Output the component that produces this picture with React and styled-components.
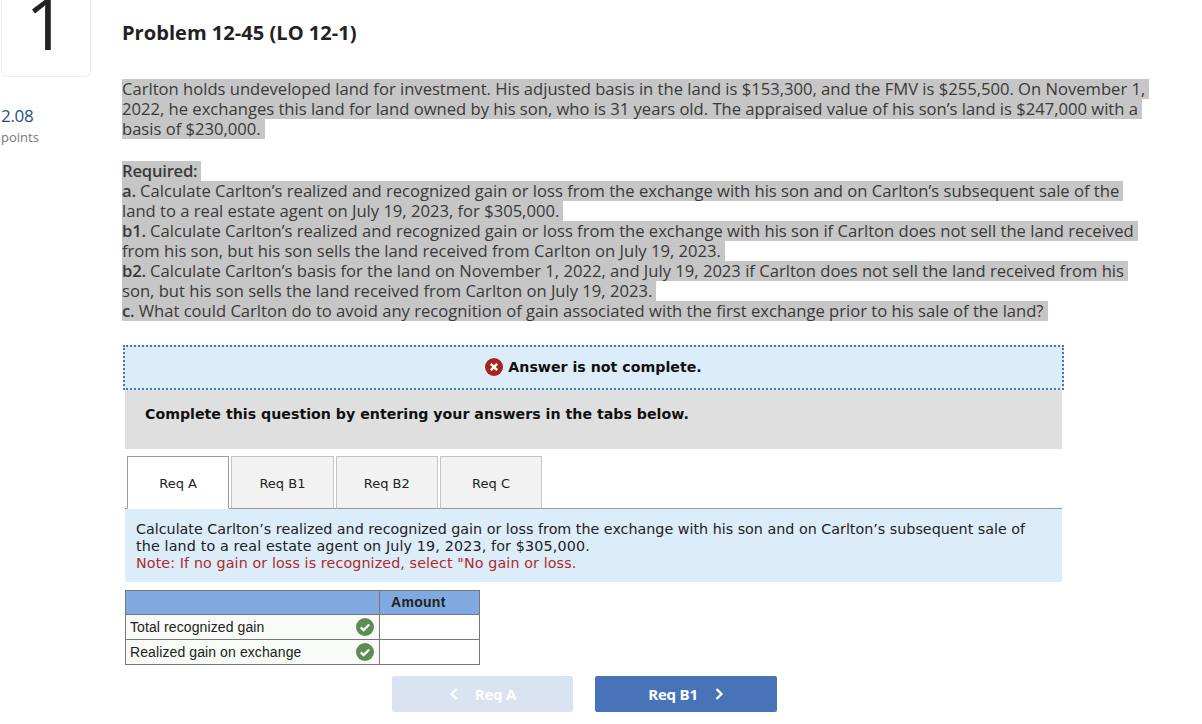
import React from "react";
import styled, { createGlobalStyle } from "styled-components";

const GlobalStyle = createGlobalStyle`
  html, body {
    margin: 0;
    padding: 0;
    background: #fff;
    overflow: hidden;
  }
`;

const Page = styled.div`
  width: 1202px;
  height: 724px;
  display: flex;
  overflow: hidden;
  font-family: "Open Sans", sans-serif;
  color: #3a3a3a;
`;

const Side = styled.aside`
  width: 122px;
  flex: none;
  padding-left: 1px;
  box-sizing: border-box;
`;

const NumberCard = styled.div`
  width: 90px;
  height: 77px;
  box-sizing: border-box;
  border: 1px solid #eee;
  border-top: none;
  border-radius: 0 0 6px 6px;
  display: flex;
  justify-content: center;
  align-items: flex-end;
  padding-bottom: 29px;
  font-size: 72px;
  line-height: 50px;
  color: #222;
  overflow: hidden;
`;

const Points = styled.div`
  margin-top: 27px;
  font-size: 17px;
  line-height: 24px;
  letter-spacing: -0.3px;
  color: #1f4e8c;
`;

const PointsLabel = styled.div`
  font-size: 13px;
  line-height: 18px;
  color: #777;
`;

const Main = styled.main`
  flex: 1;
  min-width: 0;
`;

const Title = styled.h1`
  margin: 20px 0 0;
  font-size: 20.1px;
  line-height: 26px;
  font-weight: 700;
  color: #222;
`;

const Prompt = styled.div`
  margin-top: 33px;
  font-size: 16.6px;
  line-height: 20px;
  white-space: nowrap;
`;

const Line = styled.div`
  height: 20px;
`;

const Selected = styled.span`
  background: #c6c6c6;
  padding-right: 4px;
  display: inline-block;
`;

const Strong = styled.b`
  font-weight: 600;
  letter-spacing: -0.2px;
`;

const Spacer = styled.div`
  height: 22px;
`;

const Status = styled.div`
  margin: 24px 0 0 1px;
  width: 941px;
  height: 45px;
  box-sizing: border-box;
  border: 2px dotted #4a74b8;
  padding-bottom: 2px;
  background: #dcecf8;
  display: flex;
  align-items: center;
  justify-content: center;
  gap: 5px;
  font-family: "DejaVu Sans", sans-serif;
  font-size: 14.2px;
  font-weight: 700;
  color: #111;
`;

const StatusIcon = styled.svg`
  width: 18px;
  height: 18px;
  flex: none;
`;

const Instructions = styled.div`
  margin-left: 3px;
  width: 937px;
  height: 59px;
  box-sizing: border-box;
  background: #dfdfdf;
  padding: 14px 20px 0;
  font-family: "DejaVu Sans", sans-serif;
  font-size: 14.2px;
  line-height: 20px;
  font-weight: 700;
  color: #111;
`;

const Tabs = styled.div`
  margin: 7px 0 0 3px;
  width: 937px;
  display: flex;
  gap: 2px;
  padding-left: 2px;
  box-sizing: border-box;
  border-bottom: 1px solid #999;
`;

const Tab = styled.div`
  width: 102.3px;
  height: 53px;
  box-sizing: border-box;
  margin-bottom: -1px;
  padding-top: 2px;
  border: 1px solid ${(p) => (p.$active ? "#999" : "#c4c4c4")};
  border-bottom: ${(p) => (p.$active ? "1px solid #fff" : "1px solid #999")};
  background: ${(p) => (p.$active ? "#fff" : "#f2f2f2")};
  display: flex;
  align-items: center;
  justify-content: center;
  font-family: "DejaVu Sans", sans-serif;
  font-size: 13px;
  color: #222;
`;

const Detail = styled.div`
  margin-left: 3px;
  width: 937px;
  height: 73px;
  box-sizing: border-box;
  background: #dcecf8;
  padding: 12px 11px 0;
  font-family: "DejaVu Sans", sans-serif;
  font-size: 14.3px;
  line-height: 17px;
  color: #222;
`;

const DetailTail = styled.div`
  letter-spacing: 0.14px;
`;

const Note = styled.div`
  letter-spacing: 0.1px;
  color: #b02a2a;
`;

const Table = styled.table`
  margin: 8px 0 0 3px;
  border-collapse: collapse;
  font-family: "Liberation Sans", sans-serif;
  font-size: 14px;
  letter-spacing: 0.1px;
  color: #222;
`;

const HeadCell = styled.th`
  height: 24px;
  padding: 0 0 2px 11px;
  box-sizing: border-box;
  width: ${(p) => p.$width}px;
  border: 1px solid #777;
  background: #7fa9e0;
  font-weight: 700;
  letter-spacing: 0.3px;
  text-align: left;
`;

const LabelCell = styled.td`
  height: 24px;
  padding: 0 5px 0 4px;
  border: 1px solid #777;
  background: #f7faf6;
`;

const AmountCell = styled.td`
  border: 1px solid #777;
  background: #fff;
`;

const LabelRow = styled.div`
  display: flex;
  align-items: center;
  justify-content: space-between;
`;

const CheckIcon = styled.svg`
  width: 18px;
  height: 18px;
  flex: none;
`;

const Pager = styled.div`
  margin: 11px 0 0 270px;
  display: flex;
  gap: 22px;
`;

const PageButton = styled.button`
  width: ${(p) => p.$width}px;
  height: 36px;
  border: none;
  border-radius: 2px;
  background: ${(p) => (p.$disabled ? "#dae3f1" : "#4873b8")};
  color: #fff;
  display: flex;
  align-items: center;
  justify-content: center;
  gap: 16px;
  font-family: "Open Sans", sans-serif;
  font-size: 15px;
  font-weight: 700;
  letter-spacing: -0.2px;
  padding: 0;
`;

const Chevron = styled.svg`
  width: 10px;
  height: 14px;
  flex: none;
`;

const Check = () => (
  <CheckIcon viewBox="0 0 18 18">
    <circle cx="9" cy="9" r="9" fill="#5b8c51" />
    <path d="M4.8 9.4l2.8 2.7 5.6-5.6" fill="none" stroke="#fff" strokeWidth="2.2" />
  </CheckIcon>
);

const promptLines = [
  "Carlton holds undeveloped land for investment. His adjusted basis in the land is $153,300, and the FMV is $255,500. On November 1,",
  "2022, he exchanges this land for land owned by his son, who is 31 years old. The appraised value of his son\u2019s land is $247,000 with a",
  "basis of $230,000.",
];

const requiredLines = [
  [<Strong key="r">Required:</Strong>],
  [<Strong key="a">a.</Strong>, " Calculate Carlton\u2019s realized and recognized gain or loss from the exchange with his son and on Carlton\u2019s subsequent sale of the"],
  ["land to a real estate agent on July 19, 2023, for $305,000."],
  [<Strong key="b1">b1.</Strong>, " Calculate Carlton\u2019s realized and recognized gain or loss from the exchange with his son if Carlton does not sell the land received"],
  ["from his son, but his son sells the land received from Carlton on July 19, 2023."],
  [<Strong key="b2">b2.</Strong>, " Calculate Carlton\u2019s basis for the land on November 1, 2022, and July 19, 2023 if Carlton does not sell the land received from his"],
  ["son, but his son sells the land received from Carlton on July 19, 2023."],
  [<Strong key="c">c.</Strong>, " What could Carlton do to avoid any recognition of gain associated with the first exchange prior to his sale of the land?"],
];

const tabs = ["Req A", "Req B1", "Req B2", "Req C"];

const App = () => {
  return (
    <Page>
      <GlobalStyle />
      <Side>
        <NumberCard>1</NumberCard>
        <Points>2.08</Points>
        <PointsLabel>points</PointsLabel>
      </Side>
      <Main>
        <Title>Problem 12-45 (LO 12-1)</Title>
        <Prompt>
          {promptLines.map((text) => (
            <Line key={text}>
              <Selected>{text}</Selected>
            </Line>
          ))}
          <Spacer />
          {requiredLines.map((parts, i) => (
            <Line key={i}>
              <Selected>{parts}</Selected>
            </Line>
          ))}
        </Prompt>
        <Status>
          <StatusIcon viewBox="0 0 18 18">
            <circle cx="9" cy="9" r="9" fill="#a8231c" />
            <path d="M5.8 5.8l6.4 6.4M12.2 5.8l-6.4 6.4" stroke="#fff" strokeWidth="2.4" />
          </StatusIcon>
          Answer is not complete.
        </Status>
        <Instructions>Complete this question by entering your answers in the tabs below.</Instructions>
        <Tabs>
          {tabs.map((tab, i) => (
            <Tab key={tab} $active={i === 0}>
              {tab}
            </Tab>
          ))}
        </Tabs>
        <Detail>
          Calculate Carlton’s realized and recognized gain or loss from the exchange with his son and on Carlton’s subsequent sale of
          <DetailTail>the land to a real estate agent on July 19, 2023, for $305,000.</DetailTail>
          <Note>Note: If no gain or loss is recognized, select "No gain or loss.</Note>
        </Detail>
        <Table>
          <thead>
            <tr>
              <HeadCell $width={254} />
              <HeadCell $width={100}>Amount</HeadCell>
            </tr>
          </thead>
          <tbody>
            {["Total recognized gain", "Realized gain on exchange"].map((label) => (
              <tr key={label}>
                <LabelCell>
                  <LabelRow>
                    {label}
                    <Check />
                  </LabelRow>
                </LabelCell>
                <AmountCell />
              </tr>
            ))}
          </tbody>
        </Table>
        <Pager>
          <PageButton $width={181} $disabled>
            <Chevron viewBox="0 0 10 14">
              <path d="M7.5 2L2.5 7l5 5" fill="none" stroke="#fff" strokeWidth="2.2" />
            </Chevron>
            Req A
          </PageButton>
          <PageButton $width={182}>
            Req B1
            <Chevron viewBox="0 0 10 14">
              <path d="M2.5 2l5 5-5 5" fill="none" stroke="#fff" strokeWidth="2.2" />
            </Chevron>
          </PageButton>
        </Pager>
      </Main>
    </Page>
  );
};

export default App;
